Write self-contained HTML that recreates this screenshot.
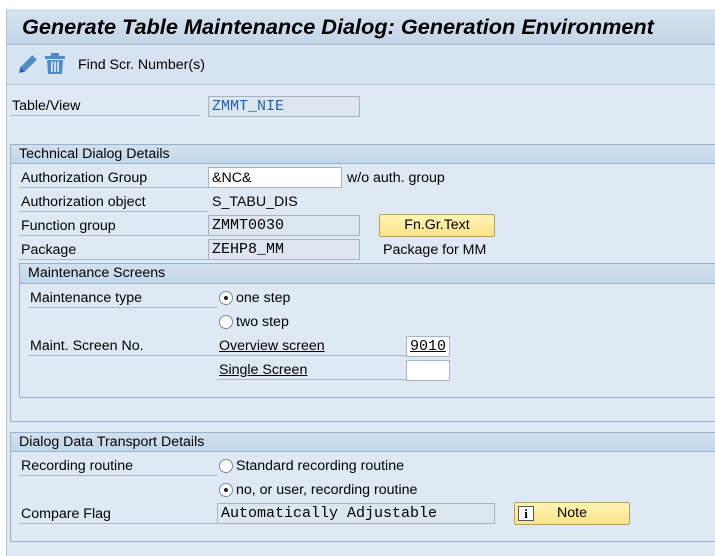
<!DOCTYPE html>
<html><head><meta charset="utf-8"><style>
*{box-sizing:border-box;margin:0;padding:0}
body{width:715px;height:556px;background:#fff;font-family:"Liberation Sans",Arial,sans-serif;font-size:14.2px;color:#000;position:relative;overflow:hidden}
.a{position:absolute;white-space:nowrap}
#page{position:absolute;left:6px;top:9px;width:709px;height:547px;background:#dfe9f3;border-left:1px solid #b4c4d4}
#title{position:absolute;left:7px;top:9px;width:708px;height:36px;background:linear-gradient(#d7e3ef,#c3d5e7);border-bottom:1px solid #9fb3c8}
#title span{position:absolute;left:15px;top:5px;font-size:21.7px;font-weight:bold;font-style:italic}
#tb{position:absolute;left:7px;top:46px;width:708px;height:39px;background:#d6e3f0;border-bottom:1px solid #b0c2d4}
.lab{position:absolute;border-bottom:1px solid #a9b9c9;height:20px;line-height:20px}
.inp{position:absolute;height:21px;border:1px solid #a7b3bf;background:#dde6ee;font-family:"Liberation Mono",monospace;font-size:15px;line-height:20px;padding-left:3px}
.w{background:#fff}
.grp{position:absolute;border:1px solid #99b1c9;background:#dfe9f3}
.gh{height:19px;background:linear-gradient(#d3e1ee,#c2d6ea);border-bottom:1px solid #99b1c9;padding-left:8px;line-height:18px}
.btn{position:absolute;height:23px;border:1px solid #b5a25a;border-radius:2px;background:linear-gradient(#fff3b5,#fde48a);text-align:center;line-height:21px}
.rad{position:absolute;width:14px;height:14px;border-radius:50%;border:1px solid #7d8a97;background:#fff}
.rad.on::after{content:"";position:absolute;left:4px;top:4px;width:4px;height:4px;border-radius:50%;background:#222}
u{text-decoration:underline}
</style></head><body>
<div id="page"></div>
<div id="title"><span>Generate Table Maintenance Dialog: Generation Environment</span></div>
<div id="tb">
<svg class="a" style="left:10px;top:7px" width="22" height="22" viewBox="0 0 20 20"><path d="M2 18 L3 13 L14 2 L18 6 L7 17 Z" fill="#4f8bc4"/><path d="M2 18 L3 13 L7 17 Z" fill="#2d5f93"/></svg>
<svg class="a" style="left:37px;top:6px" width="22" height="24" viewBox="0 0 22 24"><rect x="1" y="4" width="20" height="3" fill="#4f8bc4"/><rect x="7" y="1" width="8" height="3" fill="#4f8bc4"/><path d="M3 8 H19 L18 22 H4 Z" fill="#4f8bc4"/><rect x="7" y="9.5" width="1.8" height="10.5" fill="#d6e3f0"/><rect x="10.1" y="9.5" width="1.8" height="10.5" fill="#d6e3f0"/><rect x="13.2" y="9.5" width="1.8" height="10.5" fill="#d6e3f0"/></svg>
<span class="a" style="left:71px;top:11px">Find Scr. Number(s)</span>
</div>
<div class="lab" style="left:10px;top:96px;width:190px;padding-left:2px">Table/View</div>
<div class="inp" style="left:208px;top:96px;width:152px;color:#1f62a8">ZMMT_NIE</div>

<div class="grp" style="left:10px;top:144px;width:710px;height:278px">
<div class="gh">Technical Dialog Details</div></div>
<div class="lab" style="left:19px;top:168px;width:189px;padding-left:2px">Authorization Group</div>
<div class="inp w" style="left:208px;top:167px;width:134px;font-family:'Liberation Sans',sans-serif;font-size:14.2px">&amp;NC&amp;</div>
<span class="a" style="left:347px;top:170px">w/o auth. group</span>
<div class="lab" style="left:19px;top:192px;width:189px;padding-left:2px">Authorization object</div>
<span class="a" style="left:212px;top:194px">S_TABU_DIS</span>
<div class="lab" style="left:19px;top:216px;width:189px;padding-left:2px">Function group</div>
<div class="inp" style="left:208px;top:215px;width:152px">ZMMT0030</div>
<div class="btn" style="left:379px;top:214px;width:116px">Fn.Gr.Text</div>
<div class="lab" style="left:19px;top:240px;width:189px;padding-left:2px">Package</div>
<div class="inp" style="left:208px;top:239px;width:152px">ZEHP8_MM</div>
<span class="a" style="left:383px;top:242px">Package for MM</span>

<div class="grp" style="left:19px;top:263px;width:700px;height:135px">
<div class="gh" style="height:20px">Maintenance Screens</div></div>
<div class="lab" style="left:28px;top:288px;width:189px;padding-left:2px">Maintenance type</div>
<div class="rad on" style="left:219px;top:291px"></div><span class="a" style="left:236px;top:290px">one step</span>
<div class="rad" style="left:219px;top:315px"></div><span class="a" style="left:236px;top:314px">two step</span>
<div class="lab" style="left:28px;top:336px;width:190px;padding-left:2px">Maint. Screen No.</div>
<div class="lab" style="left:217px;top:336px;width:189px;padding-left:2px"><u>Overview screen</u></div>
<div class="inp w" style="left:406px;top:336px;width:44px"><u>9010</u></div>
<div class="lab" style="left:217px;top:360px;width:189px;padding-left:2px"><u>Single Screen</u></div>
<div class="inp w" style="left:406px;top:360px;width:44px"></div>

<div class="grp" style="left:10px;top:432px;width:710px;height:110px">
<div class="gh">Dialog Data Transport Details</div></div>
<div class="lab" style="left:19px;top:456px;width:198px;padding-left:2px">Recording routine</div>
<div class="rad" style="left:219px;top:459px"></div><span class="a" style="left:236px;top:458px">Standard recording routine</span>
<div class="rad on" style="left:219px;top:483px"></div><span class="a" style="left:236px;top:482px">no, or user, recording routine</span>
<div class="lab" style="left:19px;top:504px;width:198px;padding-left:2px">Compare Flag</div>
<div class="inp" style="left:217px;top:503px;width:278px">Automatically Adjustable</div>
<div class="btn" style="left:514px;top:502px;width:116px"><span style="position:absolute;left:3px;top:3px;width:16px;height:15px;border:1px solid #555;background:#fff;font-family:'Liberation Serif',serif;font-weight:bold;line-height:13px;font-size:13px">i</span>Note</div>
</body></html>
